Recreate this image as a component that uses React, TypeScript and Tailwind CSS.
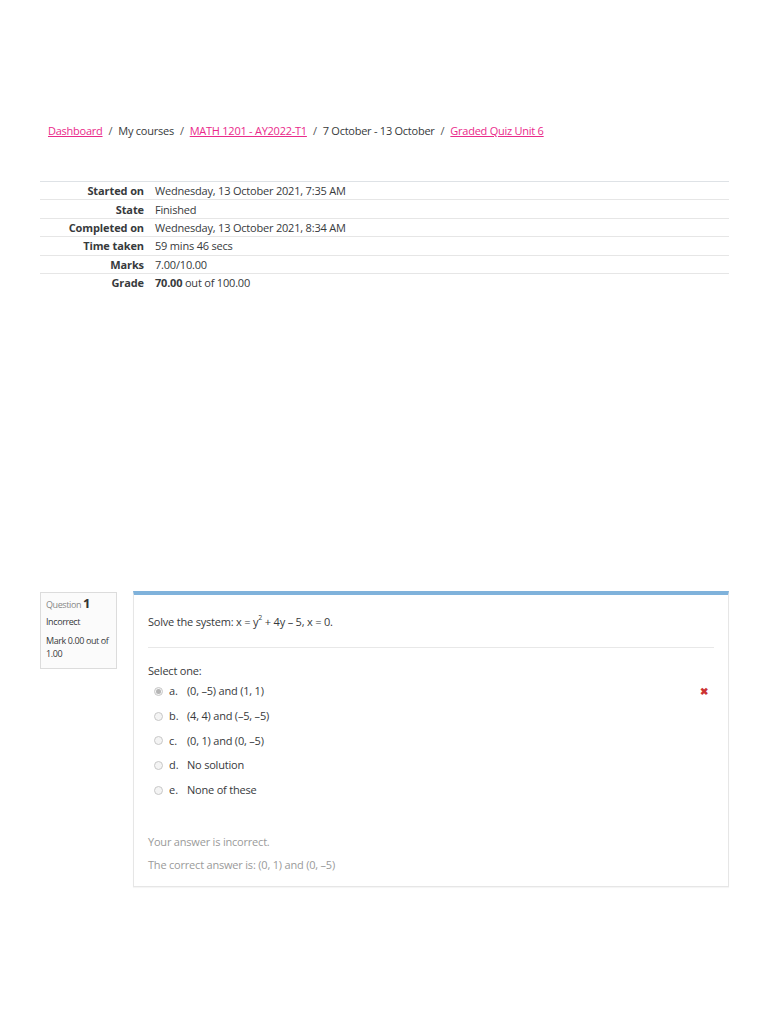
import React from "react";

const rows: { label: string; value: React.ReactNode }[] = [
  { label: "Started on", value: "Wednesday, 13 October 2021, 7:35 AM" },
  { label: "State", value: "Finished" },
  { label: "Completed on", value: "Wednesday, 13 October 2021, 8:34 AM" },
  { label: "Time taken", value: "59 mins 46 secs" },
  { label: "Marks", value: "7.00/10.00" },
  {
    label: "Grade",
    value: (
      <>
        <b className="font-bold">70.00</b> out of 100.00
      </>
    ),
  },
];

const options = [
  { letter: "a.", text: "(0, –5) and (1, 1)", checked: true },
  { letter: "b.", text: "(4, 4) and (–5, –5)" },
  { letter: "c.", text: "(0, 1) and (0, –5)" },
  { letter: "d.", text: "No solution" },
  { letter: "e.", text: "None of these" },
];

function Radio({ checked }: { checked?: boolean }) {
  return (
    <span className="flex h-[9px] w-[9px] items-center justify-center rounded-full border border-[#c8c8c8] bg-[#f4f4f4]">
      {checked && <span className="h-[5px] w-[5px] rounded-full bg-[#b5b5b5]" />}
    </span>
  );
}

export default function App() {
  return (
    <div className="min-h-[1024px] bg-white text-[11px] text-[#373a3c]" style={{ fontFamily: "'Open Sans', 'Noto Sans', sans-serif" }}>
      <div className="pl-[40px] pr-[39px] pt-[122px]">
        {/* breadcrumb */}
        <nav className="flex h-[18px] items-center gap-[6px] pl-[8px] tracking-[-0.25px]">
          <a className="text-[#ea2a8b] underline">Dashboard</a>
          <span className="text-[#555]">/</span>
          <span>My courses</span>
          <span className="text-[#555]">/</span>
          <a className="text-[#ea2a8b] underline">MATH 1201 - AY2022-T1</a>
          <span className="text-[#555]">/</span>
          <span>7 October - 13 October</span>
          <span className="text-[#555]">/</span>
          <a className="text-[#ea2a8b] underline">Graded Quiz Unit 6</a>
        </nav>

        {/* summary table */}
        <table className="mt-[41px] w-full border-collapse">
          <tbody>
            {rows.map((r, i) => (
              <tr key={r.label} className={i === 0 ? "border-t border-[#dee2e6]" : "border-t border-[#e6e6e6]"}>
                <th className="h-[18.4px] w-[110px] pr-[6px] text-right align-middle font-bold leading-none tracking-[-0.1px]">
                  {r.label}
                </th>
                <td className="h-[18.4px] pl-[5px] align-middle leading-none tracking-[-0.2px]">{r.value}</td>
              </tr>
            ))}
          </tbody>
        </table>

        {/* question */}
        <div className="mt-[299px] flex items-start gap-[16px]">
          <div className="mt-[1px] h-[77px] w-[77px] border border-[#dcdcdc] bg-[#fbfbfb] pl-[5px] pr-[2px] pt-[4px] text-[9px] leading-[13px] tracking-[-0.4px]">
            <div className="flex items-baseline gap-[2px]">
              <span className="text-[#888]">Question</span>
              <span className="text-[13px] font-bold text-[#333]">1</span>
            </div>
            <div className="mt-[4px]">Incorrect</div>
            <div className="mt-[6px]">Mark 0.00 out of 1.00</div>
          </div>

          <div className="h-[296px] flex-1 border border-t-[4px] border-[#e6e6e6] border-t-[#7fb2db] bg-white px-[14px] shadow-[0_1px_1px_rgba(0,0,0,0.04)]">
            <div className="flex h-[52px] items-center pt-[2px] tracking-[-0.2px]">
              Solve the system: x = y<sup className="text-[7px]">2</sup>&nbsp;+ 4y – 5, x = 0.
            </div>
            <div className="border-t border-[#e8e8e8]" />
            <div className="pt-[15px] tracking-[-0.2px]">Select one:</div>
            <div className="flex flex-col">
              {options.map((o) => (
                <div key={o.letter} className="flex h-[24.6px] items-center">
                  <span className="ml-[6px] mr-[6px]">
                    <Radio checked={o.checked} />
                  </span>
                  <span className="w-[18px]">{o.letter}</span>
                  <span className="flex-1 tracking-[-0.2px]">{o.text}</span>
                  {o.checked && <span className="mr-[6px] text-[10px] font-bold text-[#cc3333]">✖</span>}
                </div>
              ))}
            </div>
            <div className="mt-[32px] text-[#9a9a9a] tracking-[-0.2px]">Your answer is incorrect.</div>
            <div className="mt-[6px] text-[#9a9a9a] tracking-[-0.2px]">The correct answer is: (0, 1) and (0, –5)</div>
          </div>
        </div>
      </div>
    </div>
  );
}
